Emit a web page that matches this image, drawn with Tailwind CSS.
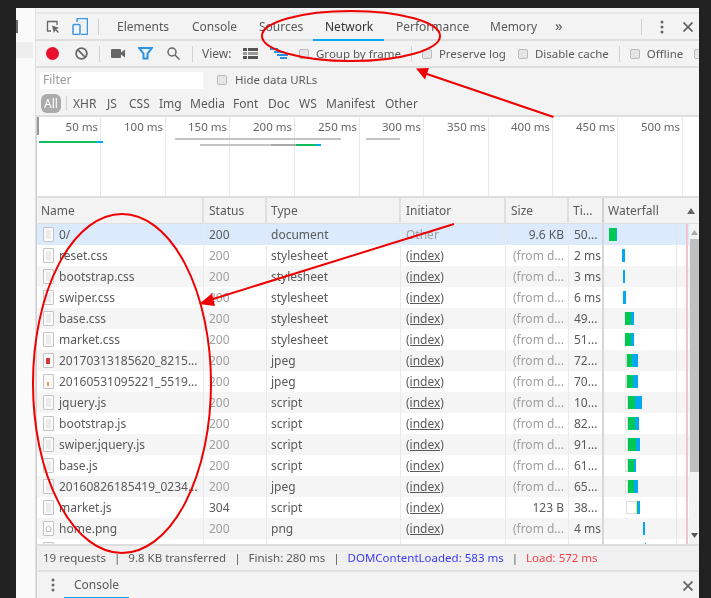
<!DOCTYPE html>
<html lang="en">
<head>
    <meta charset="UTF-8">
    <title>Network panel</title>
    <script src="https://cdn.jsdelivr.net/npm/@tailwindcss/browser@4"></script>
</head>
<body class="bg-[#212121] overflow-hidden">
<div class="relative w-[711px] h-[598px] overflow-hidden pt-2 pl-4 pr-3 font-['Noto_Sans',sans-serif] text-[12px] leading-none text-[#5a5a5a] blur-[0.35px]">
  <div class="flex h-[590px] bg-[#f3f3f3]">

    <!-- page side strip -->
    <div class="w-[20px] shrink-0 bg-[#fafafa] border-r border-[#e0e0e0] pt-[5px]">
      <div class="w-[2px] h-[13px] mt-[7px] bg-[#666]"></div>
      <div class="w-[17px] h-[16px] mt-[9px] bg-[#eeeeee]"></div>
    </div>

    <div class="flex-1 min-w-0 flex flex-col">
      <div class="h-[6px] shrink-0 bg-[#f3f3f3] border-b-2 border-[#e6e6e6]"></div>

      <!-- tabs -->
      <div class="h-[27px] shrink-0 flex items-center border-b-2 border-[#dedede] pl-[10px] relative">
        <svg class="w-[14px] h-[14px]" viewBox="0 0 14 14" fill="none" stroke="#666" stroke-width="1.3"><path d="M5 11H1.5V1.5H11V5"/><path d="M6 5.5l1.8 7.5 1.5-2.7 2.7 2.7 1-1-2.7-2.7 2.5-1.5z" fill="#666" stroke="none"/></svg>
        <svg class="w-[16px] h-[17px] ml-[12px]" viewBox="0 0 16 17" fill="none" stroke="#3b97e3" stroke-width="1.5"><path d="M5 4V1.5a1 1 0 0 1 1-1h8.500a1 1 0 0 1 1 1v14a1 1 0 0 1-1 1H9"/><rect x="1" y="6.500" width="7" height="10" rx="1"/></svg>
        <div class="w-px h-[16px] ml-[10px] bg-[#d0d0d0]"></div>
        <div class="flex ml-[18px] gap-[24px]">
          <span class="w-[51px]">Elements</span>
          <span class="w-[43px]">Console</span>
          <span class="w-[42px]">Sources</span>
          <span class="w-[47px] text-[#333] relative">Network<span class="absolute -left-[12px] -right-[12px] top-[18px] h-[2px] bg-[#03a9f4]"></span></span>
          <span class="w-[70px]">Performance</span>
          <span class="w-[45px]">Memory</span>
        </div>
        <span class="ml-[20px] text-[15px] -mt-[3px]">»</span>
        <div class="w-px h-[16px] ml-[78px] bg-[#d0d0d0]"></div>
        <svg class="w-[4px] h-[14px] ml-[18px]" viewBox="0 0 4 14" fill="#666"><circle cx="2" cy="2" r="1.500"/><circle cx="2" cy="7" r="1.500"/><circle cx="2" cy="12" r="1.500"/></svg>
        <svg class="w-[10px] h-[10px] ml-[19px]" viewBox="0 0 10 10" stroke="#666" stroke-width="1.800"><path d="M0.500 0.500l9 9M9.500 0.500l-9 9"/></svg>
      </div>

      <!-- record toolbar -->
      <div class="h-[27px] shrink-0 flex items-center border-b-2 border-[#dedede] pl-[10px] overflow-hidden whitespace-nowrap text-[11.5px]">
        <div class="w-[13px] h-[13px] rounded-full bg-[#e8112d] shrink-0"></div>
        <svg class="w-[13px] h-[13px] ml-[16px] shrink-0" viewBox="0 0 13 13" fill="none" stroke="#666" stroke-width="1.700"><circle cx="6.500" cy="6.500" r="5.400"/><path d="M2.800 2.800l7.400 7.400"/></svg>
        <div class="w-px h-[16px] ml-[11px] bg-[#d0d0d0] shrink-0"></div>
        <svg class="w-[14px] h-[9px] ml-[11px] shrink-0" viewBox="0 0 14 9" fill="#666"><rect width="10" height="9" rx="1"/><path d="M10 3.500L14 .5v8L10 5.500z"/></svg>
        <svg class="w-[15px] h-[13px] ml-[13px] shrink-0" viewBox="0 0 15 13" fill="none" stroke="#2b93e6" stroke-width="2"><path d="M1 1h13L9.500 6.500V11.500h-4V6.500z"/></svg>
        <svg class="w-[13px] h-[13px] ml-[14px] shrink-0" viewBox="0 0 13 13" fill="none" stroke="#666" stroke-width="1.500"><circle cx="5" cy="5" r="4"/><path d="M8 8l4.500 4.500"/></svg>
        <div class="w-px h-[16px] ml-[12px] bg-[#d0d0d0] shrink-0"></div>
        <span class="ml-[9px] w-[29px] text-[12px]">View:</span>
        <svg class="w-[15px] h-[11px] ml-[12px] shrink-0" viewBox="0 0 15 11" fill="#555"><rect width="4" height="3"/><rect x="5" width="10" height="3"/><rect y="4" width="4" height="3" fill="#999"/><rect x="5" y="4" width="10" height="3" fill="#999"/><rect y="8" width="4" height="3"/><rect x="5" y="8" width="10" height="3"/></svg>
        <svg class="w-[18px] h-[12px] ml-[12px] shrink-0" viewBox="0 0 18 12" fill="#2b93e6"><rect width="8" height="2"/><rect x="4" y="3" width="10" height="2"/><rect x="7" y="6" width="11" height="2"/><rect x="10" y="9" width="7" height="2"/></svg>
        <span class="w-[10px] h-[10px] ml-[11px] shrink-0 rounded-[2px] border border-[#bbb] bg-[#e6e6e6]"></span>
        <span class="ml-[7px] w-[85px]">Group by frame</span>
        <div class="w-px h-[16px] ml-[10px] bg-[#d0d0d0] shrink-0"></div>
        <span class="w-[10px] h-[10px] ml-[10px] shrink-0 rounded-[2px] border border-[#bbb] bg-[#e6e6e6]"></span>
        <span class="ml-[7px] w-[68px]">Preserve log</span>
        <span class="w-[10px] h-[10px] ml-[12px] shrink-0 rounded-[2px] border border-[#bbb] bg-[#e6e6e6]"></span>
        <span class="ml-[7px] w-[74px]">Disable cache</span>
        <div class="w-px h-[16px] ml-[10px] bg-[#d0d0d0] shrink-0"></div>
        <span class="w-[10px] h-[10px] ml-[10px] shrink-0 rounded-[2px] border border-[#bbb] bg-[#e6e6e6]"></span>
        <span class="ml-[7px] w-[39px]">Offline</span>
        <span class="w-[10px] h-[10px] ml-[11px] shrink-0 rounded-[2px] border border-[#bbb] bg-[#e6e6e6]"></span>
      </div>

      <!-- filter row -->
      <div class="h-[24px] shrink-0 flex items-center pl-[4px]">
        <div class="w-[163px] h-[17px] bg-white flex items-center pl-[3px] text-[#999]">Filter</div>
        <span class="w-[10px] h-[10px] ml-[14px] shrink-0 rounded-[2px] border border-[#bbb] bg-[#e6e6e6]"></span>
        <span class="ml-[8px] text-[11.5px]">Hide data URLs</span>
      </div>

      <!-- type filters -->
      <div class="h-[25px] shrink-0 flex items-center border-b-2 border-[#dedede] pl-[5px]">
        <span class="w-[20px] h-[19px] rounded-[6px] bg-[#ababab] text-white flex items-center justify-center">All</span>
        <div class="w-px h-[15px] ml-[5px] bg-[#d0d0d0]"></div>
        <div class="flex ml-[6px] gap-[10px]">
          <span class="w-[24px]">XHR</span>
          <span class="w-[12px]">JS</span>
          <span class="w-[20px]">CSS</span>
          <span class="w-[21px]">Img</span>
          <span class="w-[33px]">Media</span>
          <span class="w-[25px]">Font</span>
          <span class="w-[21px]">Doc</span>
          <span class="w-[17px]">WS</span>
          <span class="w-[49px]">Manifest</span>
          <span class="w-[32px]">Other</span>
        </div>
      </div>

      <!-- overview -->
      <div class="h-[81px] shrink-0 flex bg-white border-l border-[#d0d0d0] border-b-2 border-b-[#dedede] relative whitespace-nowrap text-[#666] text-[11.5px]">
        <div class="w-[64px] border-r border-[#e8e8e8] text-right pr-[2px] pt-[4px]">50 ms</div>
        <div class="w-[65px] border-r border-[#e8e8e8] text-right pr-[2px] pt-[4px]">100 ms</div>
        <div class="w-[64px] border-r border-[#e8e8e8] text-right pr-[2px] pt-[4px]">150 ms</div>
        <div class="w-[65px] border-r border-[#e8e8e8] text-right pr-[2px] pt-[4px]">200 ms</div>
        <div class="w-[65px] border-r border-[#e8e8e8] text-right pr-[2px] pt-[4px]">250 ms</div>
        <div class="w-[64px] border-r border-[#e8e8e8] text-right pr-[2px] pt-[4px]">300 ms</div>
        <div class="w-[65px] border-r border-[#e8e8e8] text-right pr-[2px] pt-[4px]">350 ms</div>
        <div class="w-[64px] border-r border-[#e8e8e8] text-right pr-[2px] pt-[4px]">400 ms</div>
        <div class="w-[65px] border-r border-[#e8e8e8] text-right pr-[2px] pt-[4px]">450 ms</div>
        <div class="w-[65px] border-r border-[#e8e8e8] text-right pr-[2px] pt-[4px]">500 ms</div>
        <div class="absolute left-[2px] top-[24px] w-[58px] h-[2px] bg-[#0fbf5f]"></div>
        <div class="absolute left-[60px] top-[24px] w-[6px] h-[2px] bg-[#03a9f4]"></div>
        <div class="absolute left-[138px] top-[21px] w-[166px] h-[2px] bg-[#c4c4c4]"></div>
        <div class="absolute left-[329px] top-[21px] w-[34px] h-[2px] bg-[#c4c4c4]"></div>
        <div class="absolute left-[163px] top-[27px] w-[71px] h-[2px] bg-[#c4c4c4]"></div>
        <div class="absolute left-[234px] top-[27px] w-[25px] h-[2px] bg-[#a8a8a8]"></div>
        <div class="absolute left-[259px] top-[27px] w-[20px] h-[2px] bg-[#0fbf5f]"></div>
        <div class="absolute left-[279px] top-[27px] w-[5px] h-[2px] bg-[#03a9f4]"></div>
        <div class="absolute left-[0] top-[0] w-[2px] h-[18px] bg-[#999]"></div>
      </div>

      <!-- table header -->
      <div class="h-[26px] shrink-0 flex items-center bg-[#f3f3f3] border-b border-[#dedede] border-l border-l-[#d0d0d0]">
        <div class="w-[167px] h-full flex items-center pl-[4px] border-r-2 border-[#e0e0e0]">Name</div>
        <div class="w-[63px] h-full flex items-center pl-[5px] border-r-2 border-[#e0e0e0]">Status</div>
        <div class="w-[134px] h-full flex items-center pl-[4px] border-r-2 border-[#e0e0e0]">Type</div>
        <div class="w-[105px] h-full flex items-center pl-[5px] border-r-2 border-[#e0e0e0]">Initiator</div>
        <div class="w-[63px] h-full flex items-center pl-[5px] border-r-2 border-[#e0e0e0]">Size</div>
        <div class="w-[35px] h-full flex items-center pl-[4px] border-r-2 border-[#d0d0d0]">Ti...</div>
        <div class="flex-1 h-full flex items-center pl-[4px]">Waterfall
          <svg class="w-[8px] h-[6px] ml-[28px]" viewBox="0 0 8 6" fill="#666"><path d="M4 0l4 6H0z"/></svg>
        </div>
      </div>

      <!-- rows -->
      <div class="h-[320px] shrink-0 relative overflow-hidden border-l border-[#d0d0d0]">
        <div id="rows"></div>
        <div class="absolute left-[639px] top-0 bottom-0 w-px bg-[#e6e6e6]"></div>
        <div class="absolute left-[649px] top-0 bottom-0 w-[2px] bg-[#f4c4cc]"></div>
        <div class="absolute right-0 top-0 bottom-0 w-[10px] bg-[#f3f3f3]">
          <svg class="w-[7px] h-[5px] absolute left-[2px] top-[6px]" viewBox="0 0 7 5" fill="#aaa"><path d="M3.500 0L7 5H0z"/></svg>
          <div class="absolute left-[1px] right-0 top-[15px] h-[233px] bg-[#c0c0c0]"></div>
          <svg class="w-[7px] h-[5px] absolute left-[2px] top-[309px]" viewBox="0 0 7 5" fill="#555"><path d="M0 0h7L3.500 5z"/></svg>
        </div>
      </div>

      <!-- summary -->
      <div class="h-[28px] shrink-0 flex items-center gap-[8px] pl-[6px] bg-[#f0f0f0] border-y-2 border-[#dedede] border-l border-l-[#d0d0d0] whitespace-nowrap text-[11.5px]">
        <span>19 requests</span><span>|</span>
        <span>9.8 KB transferred</span><span>|</span>
        <span>Finish: 280 ms</span><span>|</span>
        <span class="text-[#3a3af5]">DOMContentLoaded: 583 ms</span><span>|</span>
        <span class="text-[#f5404a]">Load: 572 ms</span>
      </div>

      <!-- drawer -->
      <div class="flex-1 flex items-center bg-[#f3f3f3] pl-[14px] relative border-l border-[#d0d0d0]">
        <svg class="w-[4px] h-[14px]" viewBox="0 0 4 14" fill="#666"><circle cx="2" cy="2" r="1.500"/><circle cx="2" cy="7" r="1.500"/><circle cx="2" cy="12" r="1.500"/></svg>
        <span class="ml-[19px] relative">Console<span class="absolute -left-[10px] -right-[10px] top-[18px] h-[2px] bg-[#03a9f4]"></span></span>
        <svg class="w-[10px] h-[10px] absolute right-[6px] top-[9px]" viewBox="0 0 10 10" stroke="#666" stroke-width="1.800"><path d="M0.500 0.500l9 9M9.500 0.500l-9 9"/></svg>
      </div>
    </div>
  </div>

  <!-- red annotations drawn on top of the screenshot -->
  <svg class="absolute left-0 top-0 w-[711px] h-[598px] pointer-events-none" viewBox="0 0 711 598" fill="none" stroke="#ee0000" stroke-width="2">
    <ellipse cx="351" cy="36" rx="89" ry="25"/>
    <ellipse cx="122" cy="383.500" rx="89" ry="169.500"/>
    <path d="M553.500 117L424 73"/>
    <path d="M416 68.500L429 68L425 79.500z" fill="#ee0000" stroke="none"/>
    <path d="M454 224L210 300"/>
    <path d="M199 304L212 293.500L215 306z" fill="#ee0000" stroke="none"/>
  </svg>
</div>

<script>
    // [name, status, type, size, time, wait box, green, blue] - bar numbers are page x
    var requests = [
        ["0/", "200", "document", "9.6 KB", "50...", null, [609, 616], [616, 617]],
        ["reset.css", "200", "stylesheet", "(from d...", "2 ms", null, null, [622, 625]],
        ["bootstrap.css", "200", "stylesheet", "(from d...", "3 ms", null, null, [623, 625]],
        ["swiper.css", "200", "stylesheet", "(from d...", "6 ms", null, null, [623, 626]],
        ["base.css", "200", "stylesheet", "(from d...", "49...", null, [625, 631], [631, 634]],
        ["market.css", "200", "stylesheet", "(from d...", "51...", null, [625, 631], [631, 634]],
        ["20170313185620_8215...", "200", "jpeg", "(from d...", "72...", [625, 627], [627, 632], [632, 638]],
        ["20160531095221_5519...", "200", "jpeg", "(from d...", "70...", [625, 627], [627, 633], [633, 638]],
        ["jquery.js", "200", "script", "(from d...", "10...", [625, 628], [628, 635], [635, 642]],
        ["bootstrap.js", "200", "script", "(from d...", "82...", [625, 628], [628, 635], [635, 639]],
        ["swiper.jquery.js", "200", "script", "(from d...", "91...", [625, 628], [628, 636], [636, 640]],
        ["base.js", "200", "script", "(from d...", "61...", [625, 628], [628, 634], [634, 636]],
        ["20160826185419_0234...", "200", "jpeg", "(from d...", "65...", [625, 628], [628, 634], [634, 638]],
        ["market.js", "304", "script", "123 B", "38...", [626, 637], [637, 638], [638, 640]],
        ["home.png", "200", "png", "(from d...", "4 ms", null, null, [643, 645]],
        ["user_icon.png", "200", "png", "(from d...", "3 ms", null, null, [645, 646]]
    ];

    function bar(range, cls) {
        if (!range) return "";
        return '<div class="absolute top-[4px] h-[13px] ' + cls + '" style="left:' + (range[0] - 604) + 'px;width:' + (range[1] - range[0]) + 'px"></div>';
    }

    function fileIcon(i) {
        var mark = '<span class="absolute left-[2px] top-[2px] w-[5px] h-[9px] bg-[#ebebeb]"></span>';
        if (i == 6) mark = '<span class="absolute left-[2px] top-[4px] w-[4px] h-[6px] bg-[#d9363e]"></span>';
        if (i == 7) mark = '<span class="absolute left-[3px] top-[7px] w-[2px] h-[4px] bg-[#e8a33d]"></span>';
        if (i == 14) mark = '<svg class="absolute left-[1px] top-[3px] w-[7px] h-[7px]" viewBox="0 0 7 7" fill="none" stroke="#bbb"><path d="M0.500 3.500L3.500 0.800L6.500 3.500M1.500 3.500V6.500H5.500V3.500"/></svg>';
        return '<span class="relative w-[11px] h-[15px] shrink-0 border border-[#c4c4c4] bg-[#fafafa] rounded-[1px]">' + mark + '</span>';
    }

    var html = "";
    requests.forEach(function (r, i) {
        var rowBg = i == 0 ? "bg-[#dbeafc]" : (i % 2 == 0 ? "bg-[#f5f5f5]" : "bg-white");
        var statusCol = r[1] == "200" && i > 0 ? "text-[#a0a0a0]" : "text-[#5a5a5a]";
        var sizeCol = r[3].charAt(0) == "(" ? "text-[#a0a0a0]" : "text-[#5a5a5a]";
        var initiator = i == 0 ? '<span class="text-[#a0a0a0]">Other</span>' : '<span class="underline">(index)</span>';
        html += '<div class="h-[21px] flex items-center whitespace-nowrap ' + rowBg + '">'
            + '<div class="w-[167px] h-full flex items-center pl-[6px] gap-[5px] border-r border-[#eaeaea]">' + fileIcon(i) + '<span>' + r[0] + '</span></div>'
            + '<div class="w-[63px] h-full flex items-center pl-[5px] border-r border-[#eaeaea] ' + statusCol + '">' + r[1] + '</div>'
            + '<div class="w-[134px] h-full flex items-center pl-[4px] border-r border-[#eaeaea]">' + r[2] + '</div>'
            + '<div class="w-[105px] h-full flex items-center pl-[5px] border-r border-[#eaeaea]">' + initiator + '</div>'
            + '<div class="w-[63px] h-full flex items-center justify-end pr-[4px] border-r border-[#eaeaea] ' + sizeCol + '">' + r[3] + '</div>'
            + '<div class="w-[35px] h-full flex items-center pl-[5px] border-r-2 border-[#d8d8d8]">' + r[4] + '</div>'
            + '<div class="flex-1 h-full relative">'
            + bar(r[5], "bg-white border border-[#ddd]") + bar(r[6], "bg-[#00c853]") + bar(r[7], "bg-[#03a9f4]")
            + '</div></div>';
    });
    document.getElementById("rows").innerHTML = html;
</script>
</body>
</html>
